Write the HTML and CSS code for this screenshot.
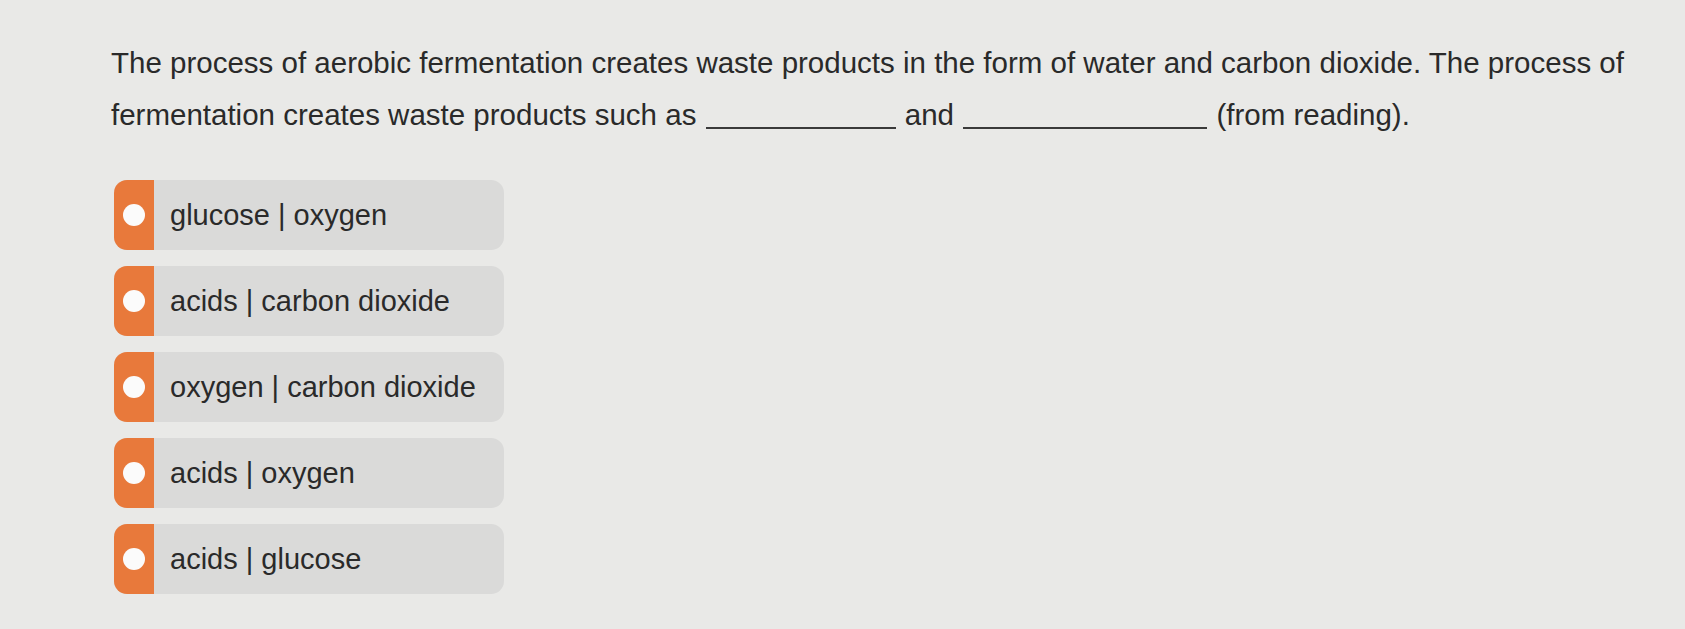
FILE: index.html
```html
<!DOCTYPE html>
<html lang="en">
<head>
    <meta charset="UTF-8">
    <meta name="viewport" content="width=device-width, initial-scale=1.0">
    <title>Fermentation Question</title>
    <link rel="stylesheet" href="styles.css">
</head>
<body>
    <div class="question">
        <p class="prompt">
            The process of aerobic fermentation creates waste products in the form of water and carbon dioxide. The process of<br>
            fermentation creates waste products such as <span class="blank short"></span> and <span class="blank long"></span> (from reading).
        </p>

        <!-- Answer choices -->
        <div class="options">
            <label class="option"><span class="tab"><span class="radio"></span></span><span class="text">glucose | oxygen</span></label>
            <label class="option"><span class="tab"><span class="radio"></span></span><span class="text">acids | carbon dioxide</span></label>
            <label class="option"><span class="tab"><span class="radio"></span></span><span class="text">oxygen | carbon dioxide</span></label>
            <label class="option"><span class="tab"><span class="radio"></span></span><span class="text">acids | oxygen</span></label>
            <label class="option"><span class="tab"><span class="radio"></span></span><span class="text">acids | glucose</span></label>
        </div>
    </div>
</body>
</html>
```
FILE: styles.css
```css
body {
    margin: 0;
    font-family: "Liberation Sans", Arial, sans-serif;
    background-color: #e9e9e7;
    color: #2a2a2a;
}

.question {
    padding: 37px 30px 30px 111px;
}

.prompt {
    margin: 0;
    font-size: 29.5px;
    line-height: 52px;
    white-space: nowrap;
}

.blank {
    display: inline-block;
    width: 190px;
    border-bottom: 2px solid #3a3a3a;
    margin: 0 1px;
    vertical-align: -4px;
}

.blank.long {
    width: 244px;
}

.options {
    margin-top: 39px;
    margin-left: 3px;
    display: flex;
    flex-direction: column;
    gap: 16px;
}

.option {
    display: flex;
    align-items: center;
    width: 390px;
    height: 70px;
    background-color: #dadad9;
    border-radius: 13px;
    overflow: hidden;
}

.tab {
    width: 40px;
    height: 100%;
    background-color: #e8793b;
    display: flex;
    align-items: center;
    justify-content: center;
    flex-shrink: 0;
}

.radio {
    width: 22px;
    height: 22px;
    border-radius: 50%;
    background-color: #fbfbfb;
}

.text {
    padding-left: 16px;
    font-size: 29px;
}
```
